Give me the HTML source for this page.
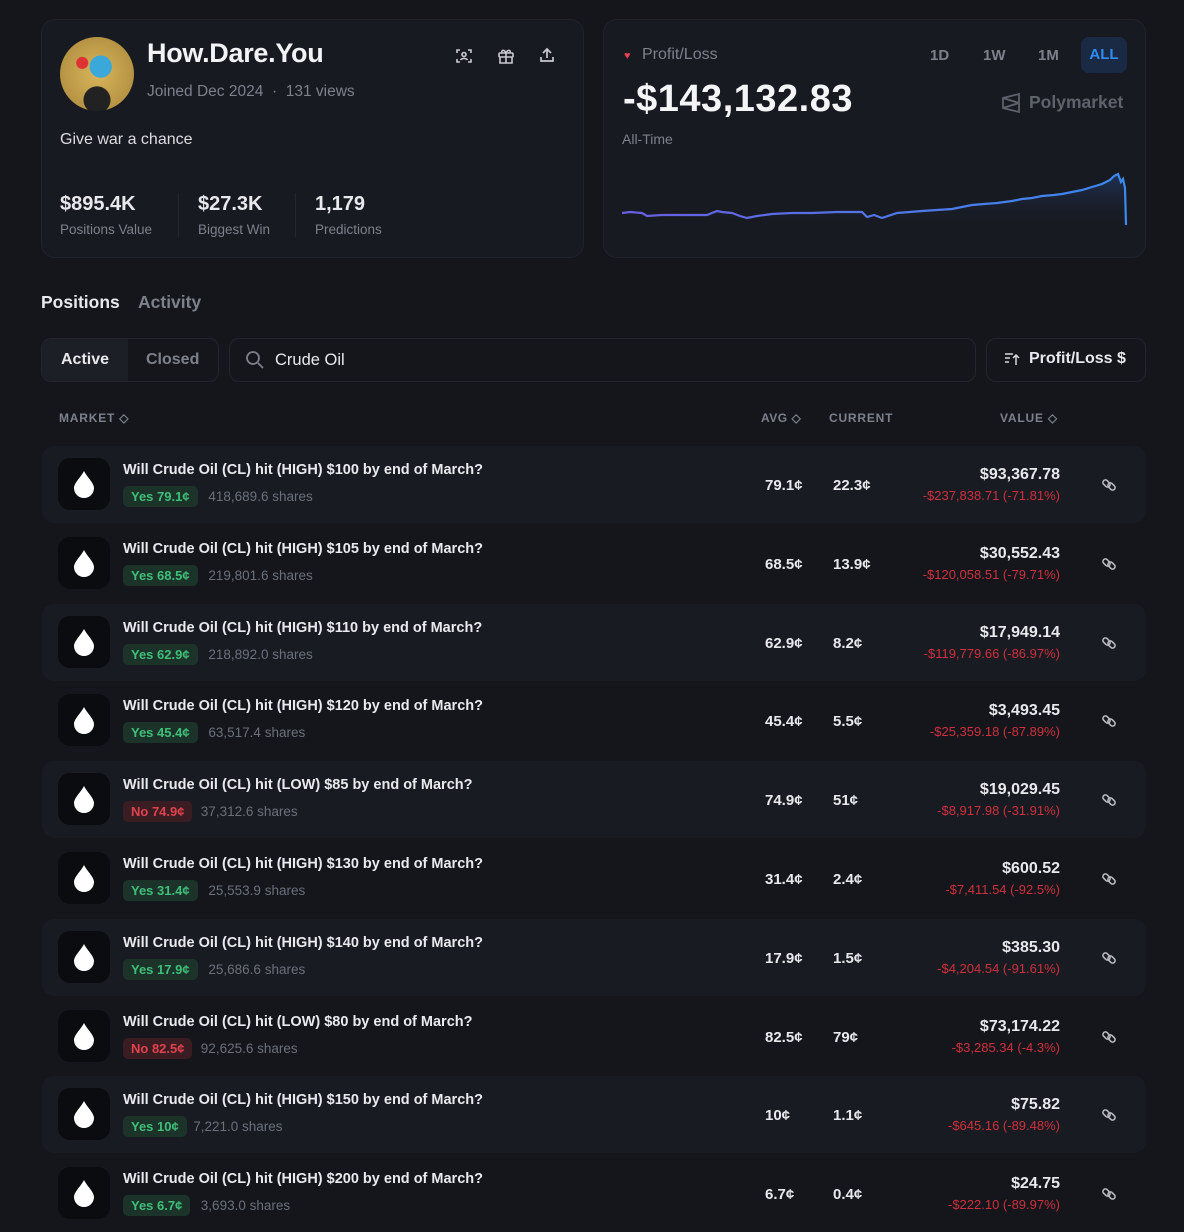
<!DOCTYPE html>
<html><head><meta charset="utf-8"><style>
*{margin:0;padding:0;box-sizing:border-box}
body{width:1184px;height:1200px;overflow:hidden;background:#14161c;font-family:"Liberation Sans",sans-serif;color:#e8e9ec;position:relative}
.abs{position:absolute}
.card{position:absolute;background:#181a21;border:1px solid #20232b;border-radius:14px}
.g{color:#7d818c}
.row{position:absolute;left:42px;width:1104px;height:77px;border-radius:12px}
.row.alt{background:#181b22}
.ico{position:absolute;left:16px;top:12px;width:52px;height:52px;background:#0b0c0f;border-radius:12px}
.ico svg{position:absolute;left:15px;top:12px}
.t{position:absolute;left:81px;top:16px;font-size:14.5px;font-weight:bold;color:#e9eaed}
.b{position:absolute;left:81px;top:40px;height:21px;padding:3px 8px;border-radius:5px;font-size:13px;font-weight:bold}
.y{background:#1c3329;color:#3fbf7a}
.n{background:#3a1d22;color:#e0424f}
.sh{position:absolute;top:43px;font-size:13.5px;color:#6b707b}
.av{position:absolute;left:723px;top:31px;font-size:15px;font-weight:bold}
.cu{position:absolute;left:791px;top:31px;font-size:15px;font-weight:bold}
.v{position:absolute;right:86px;top:20px;font-size:16px;font-weight:bold;text-align:right}
.l{position:absolute;right:86px;top:42px;font-size:13px;color:#d0303c;text-align:right}
.lk{position:absolute;left:1059px;top:31px}
</style></head><body>
<div class="card" style="left:41px;top:19px;width:543px;height:239px"></div>
<div class="abs" style="left:60px;top:37px;width:74px;height:74px;border-radius:50%;background:radial-gradient(circle at 30% 35%,#d33 0 8%,transparent 9%),radial-gradient(circle at 55% 40%,#3aa8d8 0 18%,transparent 19%),radial-gradient(circle at 50% 85%,#222 0 18%,transparent 19%),radial-gradient(circle at 50% 50%,#d8b55a,#a8853a)"></div>
<div class="abs" style="left:147px;top:38px;font-size:27px;font-weight:bold;color:#f2f3f5;letter-spacing:-0.3px">How.Dare.You</div>
<div class="abs g" style="left:147px;top:83px;font-size:15.5px">Joined Dec 2024 &nbsp;·&nbsp; 131 views</div>
<svg class="abs" style="left:455px;top:47px" width="18" height="18" viewBox="0 0 18 18" fill="none" stroke="#c8cad0" stroke-width="1.6"><path d="M2 6V3h3M13 3h3v3M16 12v3h-3M5 15H2v-3"/><circle cx="9" cy="7.5" r="2"/><path d="M5.5 13c1-2 6-2 7 0"/></svg>
<svg class="abs" style="left:497px;top:47px" width="18" height="18" viewBox="0 0 18 18" fill="none" stroke="#c8cad0" stroke-width="1.6"><rect x="2" y="6" width="14" height="4" rx="1"/><path d="M3 10v6h12v-6M9 6v10M9 6C7 2 4 3 5 6M9 6c2-4 5-3 4 0"/></svg>
<svg class="abs" style="left:538px;top:46px" width="18" height="18" viewBox="0 0 18 18" fill="none" stroke="#c8cad0" stroke-width="1.7"><path d="M9 12V3M5 7l4-4 4 4M3 11v4h12v-4"/></svg>
<div class="abs" style="left:60px;top:131px;font-size:16px;color:#dcdde1">Give war a chance</div>
<div class="abs" style="left:60px;top:193px;font-size:20px;font-weight:bold">$895.4K</div>
<div class="abs g" style="left:60px;top:222px;font-size:13.5px">Positions Value</div>
<div class="abs" style="left:178px;top:193px;width:1px;height:44px;background:#23262e"></div>
<div class="abs" style="left:198px;top:193px;font-size:20px;font-weight:bold">$27.3K</div>
<div class="abs g" style="left:198px;top:222px;font-size:13.5px">Biggest Win</div>
<div class="abs" style="left:295px;top:193px;width:1px;height:44px;background:#23262e"></div>
<div class="abs" style="left:315px;top:193px;font-size:20px;font-weight:bold">1,179</div>
<div class="abs g" style="left:315px;top:222px;font-size:13.5px">Predictions</div>

<div class="card" style="left:603px;top:19px;width:543px;height:239px"></div>
<div class="abs" style="left:624px;top:50px;font-size:11px;color:#e0424f">♥</div>
<div class="abs g" style="left:642px;top:46px;font-size:16px">Profit/Loss</div>
<div class="abs g" style="left:930px;top:47px;font-size:15px;font-weight:bold">1D</div>
<div class="abs g" style="left:983px;top:47px;font-size:15px;font-weight:bold">1W</div>
<div class="abs g" style="left:1038px;top:47px;font-size:15px;font-weight:bold">1M</div>
<div class="abs" style="left:1081px;top:37px;width:46px;height:36px;border-radius:8px;background:#1b2a44;color:#2f8cf0;font-size:15px;font-weight:bold;text-align:center;line-height:36px">ALL</div>
<div class="abs" style="left:623px;top:78px;font-size:38px;font-weight:bold;color:#f4f5f7;letter-spacing:0.5px">-$143,132.83</div>
<svg class="abs" style="left:1000px;top:92px" width="22" height="22" viewBox="0 0 22 22" fill="none" stroke="#5e626c" stroke-width="1.8"><path d="M19 2L3 6v10l16 4zM3 6l16 5M3 16l16-5"/></svg>
<div class="abs" style="left:1029px;top:92px;font-size:17.5px;font-weight:bold;color:#5e626c">Polymarket</div>
<div class="abs g" style="left:622px;top:131px;font-size:14px">All-Time</div>
<svg class="abs" style="left:622px;top:170px" width="508" height="62" viewBox="0 0 508 62">
<defs><linearGradient id="gr" x1="0" x2="1"><stop offset="0" stop-color="#6a5fe0"/><stop offset="1" stop-color="#3a8af0"/></linearGradient><linearGradient id="fa" x1="0" y1="0" x2="0" y2="1"><stop offset="0" stop-color="#2a4a8a" stop-opacity=".5"/><stop offset="1" stop-color="#14161c" stop-opacity="0"/></linearGradient></defs>
<path d="M0 43 L20 43 L25 46 L60 45 L85 45 L95 41 L110 43 L125 48 L150 44 L190 43 L240 42 L250 48 L260 47 L275 43 L330 39 L350 35 L375 33 L400 29 L420 26 L440 24 L460 20 L480 14 L492 6 L496 4 L499 12 L503 18 L504 55 L504 62 L460 62 Z" fill="url(#fa)"/>
<path d="M0 43 L8 42 L20 43 L25 46 L40 45 L60 45 L85 45 L90 43 L95 41 L100 42 L110 43 L118 46 L125 48 L135 46 L150 44 L170 43 L190 43 L215 42 L240 42 L245 47 L252 45 L260 48 L275 43 L300 41 L330 39 L340 37 L350 35 L362 34 L375 33 L390 31 L400 29 L410 28 L420 26 L432 25 L440 24 L450 22 L460 20 L470 17 L480 14 L488 10 L492 6 L496 4 L499 12 L501 9 L503 18 L504 55" fill="none" stroke="url(#gr)" stroke-width="2.2"/></svg>

<div class="abs" style="left:41px;top:292px;font-size:17.5px;font-weight:bold">Positions</div>
<div class="abs g" style="left:138px;top:292px;font-size:17.5px;font-weight:bold">Activity</div>
<div class="abs" style="left:41px;top:338px;width:178px;height:44px;border:1px solid #22252d;border-radius:10px"></div>
<div class="abs" style="left:42px;top:339px;width:86px;height:42px;background:#1c1f26;border-radius:9px 0 0 9px;font-size:16px;font-weight:bold;line-height:42px;text-align:center">Active</div>
<div class="abs g" style="left:146px;top:351px;font-size:16px;font-weight:bold">Closed</div>
<div class="abs" style="left:229px;top:338px;width:747px;height:44px;border:1px solid #22252d;border-radius:10px"></div>
<svg class="abs" style="left:245px;top:350px" width="20" height="20" viewBox="0 0 20 20" fill="none" stroke="#7d818c" stroke-width="1.8"><circle cx="8" cy="8" r="6"/><path d="M13 13l5 5"/></svg>
<div class="abs" style="left:275px;top:351px;font-size:16.5px">Crude Oil</div>
<div class="abs" style="left:986px;top:338px;width:160px;height:44px;border:1px solid #22252d;border-radius:10px"></div>
<svg class="abs" style="left:1004px;top:351px" width="16" height="16" viewBox="0 0 16 16" fill="none" stroke="#d8d9dd" stroke-width="1.5"><path d="M1 3h8M1 7h5M1 11h4M12 14V4M9 7l3-3 3 3"/></svg>
<div class="abs" style="left:1029px;top:350px;font-size:16px;font-weight:bold">Profit/Loss $</div>

<div class="abs g" style="left:59px;top:411px;font-size:12px;font-weight:bold;letter-spacing:.8px">MARKET ◇</div>
<div class="abs g" style="left:761px;top:411px;font-size:12px;font-weight:bold;letter-spacing:.5px">AVG ◇</div>
<div class="abs g" style="left:829px;top:411px;font-size:12px;font-weight:bold;letter-spacing:.8px">CURRENT</div>
<div class="abs g" style="left:1000px;top:411px;font-size:12px;font-weight:bold;letter-spacing:.8px">VALUE ◇</div>

<div id="rows"></div>
<script>
const d=[["HIGH","$100","y","Yes 79.1¢","418,689.6 shares","79.1¢","22.3¢","$93,367.78","-$237,838.71 (-71.81%)"],
["HIGH","$105","y","Yes 68.5¢","219,801.6 shares","68.5¢","13.9¢","$30,552.43","-$120,058.51 (-79.71%)"],
["HIGH","$110","y","Yes 62.9¢","218,892.0 shares","62.9¢","8.2¢","$17,949.14","-$119,779.66 (-86.97%)"],
["HIGH","$120","y","Yes 45.4¢","63,517.4 shares","45.4¢","5.5¢","$3,493.45","-$25,359.18 (-87.89%)"],
["LOW","$85","n","No 74.9¢","37,312.6 shares","74.9¢","51¢","$19,029.45","-$8,917.98 (-31.91%)"],
["HIGH","$130","y","Yes 31.4¢","25,553.9 shares","31.4¢","2.4¢","$600.52","-$7,411.54 (-92.5%)"],
["HIGH","$140","y","Yes 17.9¢","25,686.6 shares","17.9¢","1.5¢","$385.30","-$4,204.54 (-91.61%)"],
["LOW","$80","n","No 82.5¢","92,625.6 shares","82.5¢","79¢","$73,174.22","-$3,285.34 (-4.3%)"],
["HIGH","$150","y","Yes 10¢","7,221.0 shares","10¢","1.1¢","$75.82","-$645.16 (-89.48%)"],
["HIGH","$200","y","Yes 6.7¢","3,693.0 shares","6.7¢","0.4¢","$24.75","-$222.10 (-89.97%)"]];
let h="";
d.forEach((r,i)=>{const top=446+i*78.8;const bw=r[3].length*7.6+12;
h+=`<div class="row${i%2==0?' alt':''}" style="top:${top}px">
<div class="ico"><svg width="22" height="28" viewBox="0 0 22 28"><path d="M11 1C8 7 1 13 1 18a10 10 0 0 0 20 0C21 13 14 7 11 1z" fill="#fff"/></svg></div>
<div class="t">Will Crude Oil (CL) hit (${r[0]}) ${r[1]} by end of March?</div>
<div class="b ${r[2]}">${r[3]}</div><div class="sh" style="left:${81+bw+5}px">${r[4]}</div>
<div class="av">${r[5]}</div><div class="cu">${r[6]}</div>
<div class="v">${r[7]}</div><div class="l">${r[8]}</div>
<svg class="lk" width="16" height="16" viewBox="0 0 16 16" fill="none" stroke="#b8bac0" stroke-width="1.6"><rect x="1.5" y="4" width="8" height="5" rx="2.5" transform="rotate(45 5.5 6.5)"/><rect x="6.5" y="7" width="8" height="5" rx="2.5" transform="rotate(45 10.5 9.5)"/></svg></div>`;});
document.getElementById("rows").innerHTML=h;
</script>
</body></html>
